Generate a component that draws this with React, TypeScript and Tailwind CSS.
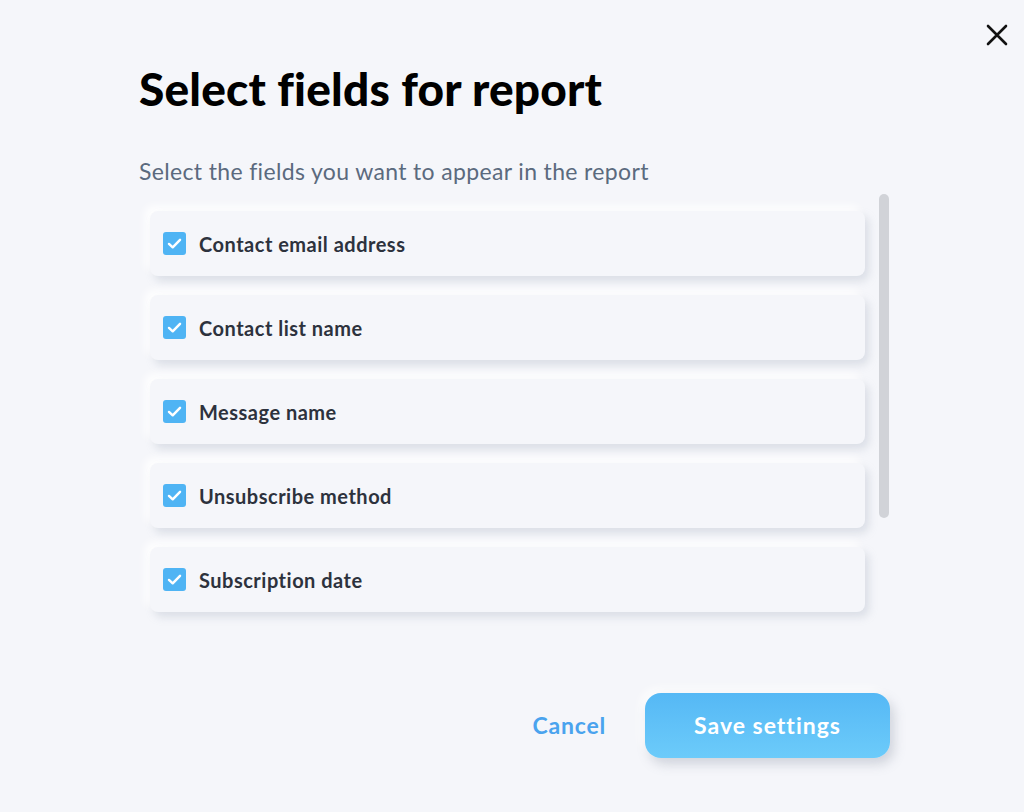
import React from "react";

const fields = [
  "Contact email address",
  "Contact list name",
  "Message name",
  "Unsubscribe method",
  "Subscription date",
];

function Check() {
  return (
    <div className="w-[23px] h-[23px] rounded-[3px] bg-[#4fb4f4] flex items-center justify-center shrink-0">
      <svg width="17" height="17" viewBox="0 0 16 16" fill="none">
        <path d="M2.8 8.4 L6.3 11.6 L13.2 4.6" stroke="white" strokeWidth="2.3" strokeLinecap="round" strokeLinejoin="round" />
      </svg>
    </div>
  );
}

export default function App() {
  return (
    <div
      className="w-[1024px] h-[812px] bg-[#f5f6fa] relative overflow-hidden"
      style={{ fontFamily: "Lato, 'Open Sans', sans-serif" }}
    >
      <button className="absolute top-[24px] right-[16px] w-[22px] h-[22px] flex items-center justify-center">
        <svg width="22" height="22" viewBox="0 0 22 22" fill="none">
          <path d="M2 2 L20 20 M20 2 L2 20" stroke="#111" strokeWidth="2.6" strokeLinecap="round" />
        </svg>
      </button>

      <div className="pl-[139px] pt-[60px] flex flex-col">
        <h1 className="text-[46px] leading-[58px] font-black text-black tracking-[0.2px]">
          Select fields for report
        </h1>
        <p className="mt-[38px] text-[23px] leading-[30px] text-[#5b6a7e] tracking-[0.35px]">
          Select the fields you want to appear in the report
        </p>

        <div className="mt-[8px] flex w-[752px]">
          <div className="flex flex-col gap-[19px] pl-[11px] pt-[17px] w-[726px]">
            {fields.map((f) => (
              <div
                key={f}
                className="h-[65px] rounded-[8px] bg-[#f5f6fa] flex items-center gap-[13px] px-[13px] shadow-[4px_5px_9px_rgba(150,160,180,0.28),-5px_-5px_9px_rgba(255,255,255,0.95)]"
              >
                <Check />
                <span className="text-[20px] font-bold text-[#2d323d] tracking-[0.5px]">{f}</span>
              </div>
            ))}
          </div>
          <div className="ml-[14px] w-[10px] h-[324px] rounded-full bg-[#d1d3d8]" />
        </div>

        <div className="mt-[81px] flex items-center justify-end w-[751px] gap-[39px]">
          <button className="text-[23px] font-bold text-[#4aa3ee] tracking-[0.8px]">Cancel</button>
          <button className="w-[245px] h-[65px] rounded-[16px] bg-gradient-to-b from-[#55b8f5] to-[#6ccbfa] text-white text-[23px] font-bold tracking-[1px] shadow-[4px_6px_12px_rgba(120,130,150,0.3),-4px_-4px_10px_rgba(255,255,255,0.9)]">
            Save settings
          </button>
        </div>
      </div>
    </div>
  );
}
